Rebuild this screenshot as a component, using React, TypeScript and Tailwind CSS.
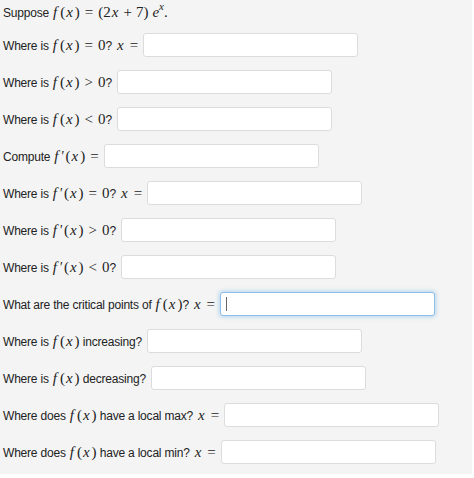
import type { ReactNode } from 'react'

const mathFont = { fontFamily: '"Liberation Serif", "DejaVu Serif", serif' }

function V({ children }: { children: ReactNode }) {
  return <span className="italic">{children}</span>
}

function X() {
  return <span className="italic mx-[1px]">x</span>
}

function Rel({ children, end = false }: { children: ReactNode; end?: boolean }) {
  return <span className={end ? 'ml-[5px]' : 'mx-[5px]'}>{children}</span>
}

function Bin({ children }: { children: ReactNode }) {
  return <span className="mx-[4px]">{children}</span>
}

function M({ children }: { children: ReactNode }) {
  return (
    <span className="text-[15px] tracking-normal ml-[4px] whitespace-nowrap" style={mathFont}>
      {children}
    </span>
  )
}

function Fx({ prime = false }: { prime?: boolean }) {
  return (
    <>
      <V>f</V>
      {prime && <span className="ml-[2px] text-[14px] italic">'</span>}
      <span className={prime ? 'ml-[2px]' : 'ml-[3px]'}>(</span>
      <X />
      <span className="ml-[1px]">)</span>
    </>
  )
}

function Box({ focused = false }: { focused?: boolean }) {
  return (
    <div
      className={`ml-[5px] h-[24px] w-[215px] shrink-0 rounded-[3px] border bg-white flex items-center ${
        focused
          ? 'border-[#8fbde6] shadow-[0_0_4px_1px_rgba(102,175,233,0.45)]'
          : 'border-[#dcdcdc]'
      }`}
    >
      {focused && <div className="ml-[5px] h-[14px] w-[1px] bg-[#666]" />}
    </div>
  )
}

function Row({ children, focused }: { children: ReactNode; focused?: boolean }) {
  return (
    <div className="flex items-center h-[24px]">
      <span className="whitespace-nowrap">{children}</span>
      <Box focused={focused} />
    </div>
  )
}

function XEq() {
  return (
    <M>
      <X />
      <Rel end>=</Rel>
    </M>
  )
}

export default function App() {
  return (
    <div className="w-[474px] h-[478px] bg-white">
      <div
        className="w-[472px] h-[474px] bg-[#f4f4f4] pl-[3px] text-[12px] tracking-[-0.2px] text-[#222]"
        style={{ fontFamily: '"Liberation Sans", Arial, sans-serif' }}
      >
        <div className="flex items-center h-[24px] mb-[9px]">
          <span className="whitespace-nowrap">
            Suppose
            <M>
              <Fx />
              <Rel>=</Rel>(2<X />
              <Bin>+</Bin>7)
              <span className="ml-[4px]">
                <V>e</V>
              </span>
              <sup className="italic text-[11px] relative -top-[7px]">x</sup>.
            </M>
          </span>
        </div>

        <div className="flex flex-col gap-[13px]">
          <Row>
            Where is
            <M>
              <Fx />
              <Rel>=</Rel>0
            </M>
            ?
            <XEq />
          </Row>
          <Row>
            Where is
            <M>
              <Fx />
              <Rel>&gt;</Rel>0
            </M>
            ?{' '}
          </Row>
          <Row>
            Where is
            <M>
              <Fx />
              <Rel>&lt;</Rel>0
            </M>
            ?{' '}
          </Row>
          <Row>
            Compute
            <M>
              <Fx prime />
              <Rel end>=</Rel>
            </M>
          </Row>
          <Row>
            Where is
            <M>
              <Fx prime />
              <Rel>=</Rel>0
            </M>
            ?
            <XEq />
          </Row>
          <Row>
            Where is
            <M>
              <Fx prime />
              <Rel>&gt;</Rel>0
            </M>
            ?{' '}
          </Row>
          <Row>
            Where is
            <M>
              <Fx prime />
              <Rel>&lt;</Rel>0
            </M>
            ?{' '}
          </Row>
          <Row focused>
            What are the critical points of
            <M>
              <Fx />
            </M>
            ?
            <XEq />
          </Row>
          <Row>
            Where is
            <M>
              <Fx />
            </M>{' '}
            increasing?{' '}
          </Row>
          <Row>
            Where is
            <M>
              <Fx />
            </M>{' '}
            decreasing?{' '}
          </Row>
          <Row>
            Where does
            <M>
              <Fx />
            </M>{' '}
            have a local max?
            <XEq />
          </Row>
          <Row>
            Where does
            <M>
              <Fx />
            </M>{' '}
            have a local min?
            <XEq />
          </Row>
        </div>
      </div>
    </div>
  )
}
